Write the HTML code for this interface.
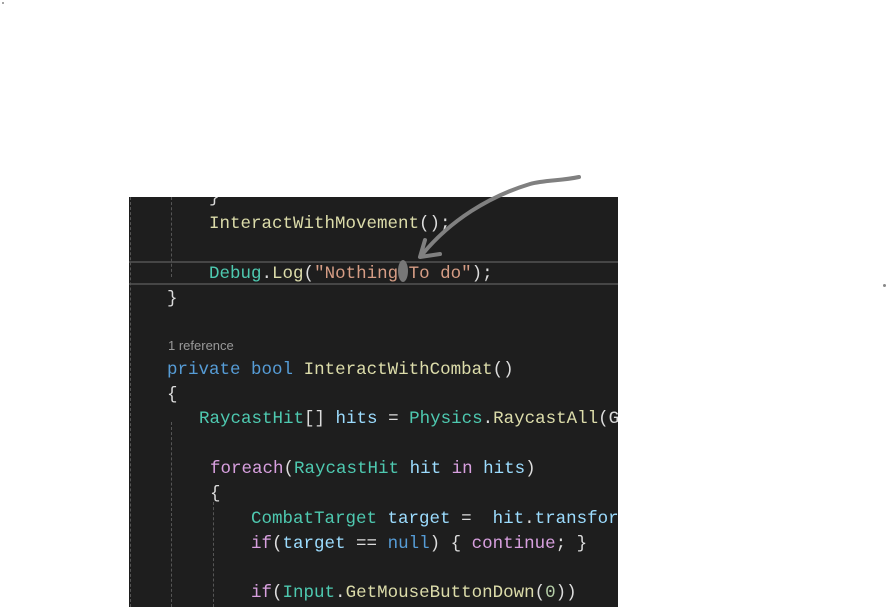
<!DOCTYPE html>
<html><head><style>
body{margin:0;width:887px;height:607px;background:#fff;position:relative;overflow:hidden;font-family:"Liberation Mono",monospace}
#ed{position:absolute;left:129px;top:197px;width:489px;height:410px;background:#1e1e1e;overflow:hidden}
.l{position:absolute;font-size:17.5px;white-space:pre;color:#dcdcdc;line-height:20px;margin-top:3px}
.m{color:#dcdcaa}.t{color:#4ec9b0}.s{color:#d69d85}.k{color:#569cd6}.c{color:#d8a0df}.v{color:#9cdcfe}.n{color:#b5cea8}
.g{position:absolute;width:0;border-left:1px dashed #555}
.hl{position:absolute;left:0;width:489px;height:20px;top:64px;border-top:2px solid #464646;border-bottom:2px solid #464646}
.ref{position:absolute;font-family:"Liberation Sans",sans-serif;font-size:13px;color:#999;margin-top:1px}
</style></head><body>
<div style="position:absolute;left:2px;top:2px;width:2px;height:2px;background:#888;border-radius:1px"></div>
<div style="position:absolute;left:883px;top:284px;width:3px;height:3px;background:#888;border-radius:2px"></div>
<div id="ed">
<div class="hl"></div>
<div class="g" style="left:1px;top:0;height:410px"></div>
<div class="g" style="left:42px;top:0;height:80px"></div>
<div class="g" style="left:42px;top:225px;height:185px"></div>
<div class="g" style="left:84px;top:305px;height:105px"></div>
<div class="l" style="left:80px;top:-12px">}</div>
<div class="l" style="left:80px;top:14px"><span class="m">InteractWithMovement</span>();</div>
<div class="l" style="left:80px;top:64px"><span class="t">Debug</span>.<span class="m">Log</span>(<span class="s">"Nothing To do"</span>);</div>
<div class="l" style="left:38px;top:89px">}</div>
<div class="ref" style="left:39px;top:140px">1 reference</div>
<div class="l" style="left:38px;top:160px"><span class="k">private</span> <span class="k">bool</span> <span class="m">InteractWithCombat</span>()</div>
<div class="l" style="left:38px;top:185px">{</div>
<div class="l" style="left:70px;top:209px"><span class="t">RaycastHit</span>[] <span class="v">hits</span> = <span class="t">Physics</span>.<span class="m">RaycastAll</span>(G</div>
<div class="l" style="left:81px;top:259px"><span class="c">foreach</span>(<span class="t">RaycastHit</span> <span class="v">hit</span> <span class="c">in</span> <span class="v">hits</span>)</div>
<div class="l" style="left:81px;top:284px">{</div>
<div class="l" style="left:122px;top:309px"><span class="t">CombatTarget</span> <span class="v">target</span> =  <span class="v">hit</span>.<span class="v">transform</span></div>
<div class="l" style="left:122px;top:334px"><span class="c">if</span>(<span class="v">target</span> == <span class="k">null</span>) { <span class="c">continue</span>; }</div>
<div class="l" style="left:122px;top:383px"><span class="c">if</span>(<span class="t">Input</span>.<span class="m">GetMouseButtonDown</span>(<span class="n">0</span>))</div>
</div>
<svg style="position:absolute;left:0;top:0" width="887" height="607">
<path d="M579 177 C560 181 545 180 530 184 C490 196 450 220 421 256" fill="none" stroke="#808080" stroke-width="4" stroke-linecap="round"/>
<path d="M425 240 L420 257 L440 254" fill="none" stroke="#808080" stroke-width="4" stroke-linecap="round" stroke-linejoin="round"/>
<ellipse cx="403" cy="271" rx="5" ry="11" fill="#777"/>
</svg>
</body></html>
